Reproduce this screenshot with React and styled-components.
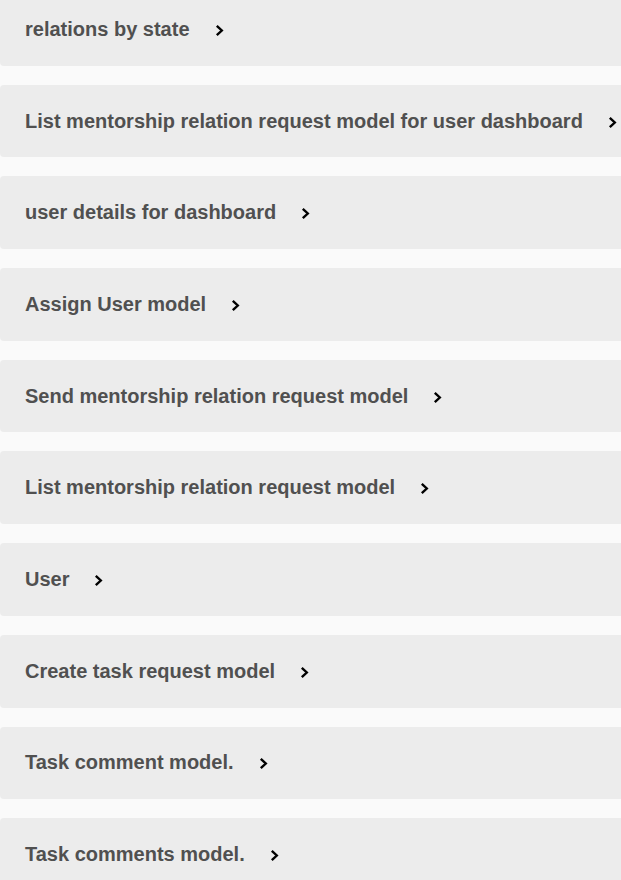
import React from "react"
import styled, { createGlobalStyle } from "styled-components"

const GlobalStyle = createGlobalStyle`
   html, body {
      margin: 0;
      padding: 0;
      background: #fafafa;
      overflow: hidden;
   }
`

const ModelList = styled.section`
   display: flex;
   flex-direction: column;
   gap: 19px;
   margin-top: -7px;
   width: calc(100% + 20px);
   font-family: "Liberation Sans", Arial, sans-serif;
`

const ModelBox = styled.div`
   display: flex;
   align-items: center;
   height: 72.7px;
   padding: 0 25px;
   box-sizing: border-box;
   background: #ececec;
   border-radius: 4px;
`

const ModelTitle = styled.span`
   font-size: 20px;
   font-weight: 700;
   color: #505050;
   white-space: nowrap;
`

const Toggle = styled.svg`
   flex: none;
   width: 9px;
   height: 13px;
   margin-left: 25px;
   margin-top: 2px;
`

const models = [
   "relations by state",
   "List mentorship relation request model for user dashboard",
   "user details for dashboard",
   "Assign User model",
   "Send mentorship relation request model",
   "List mentorship relation request model",
   "User",
   "Create task request model",
   "Task comment model.",
   "Task comments model.",
]

const Chevron = () => (
   <Toggle viewBox="0 0 9 13">
      <path d="M1.8 1.8 L6.8 6.5 L1.8 11.2" fill="none" stroke="#000" strokeWidth="2.4" />
   </Toggle>
)

const App = () => (
   <>
      <GlobalStyle />
      <ModelList>
         {models.map((name) => (
            <ModelBox key={name}>
               <ModelTitle>{name}</ModelTitle>
               <Chevron />
            </ModelBox>
         ))}
      </ModelList>
   </>
)

export default App
